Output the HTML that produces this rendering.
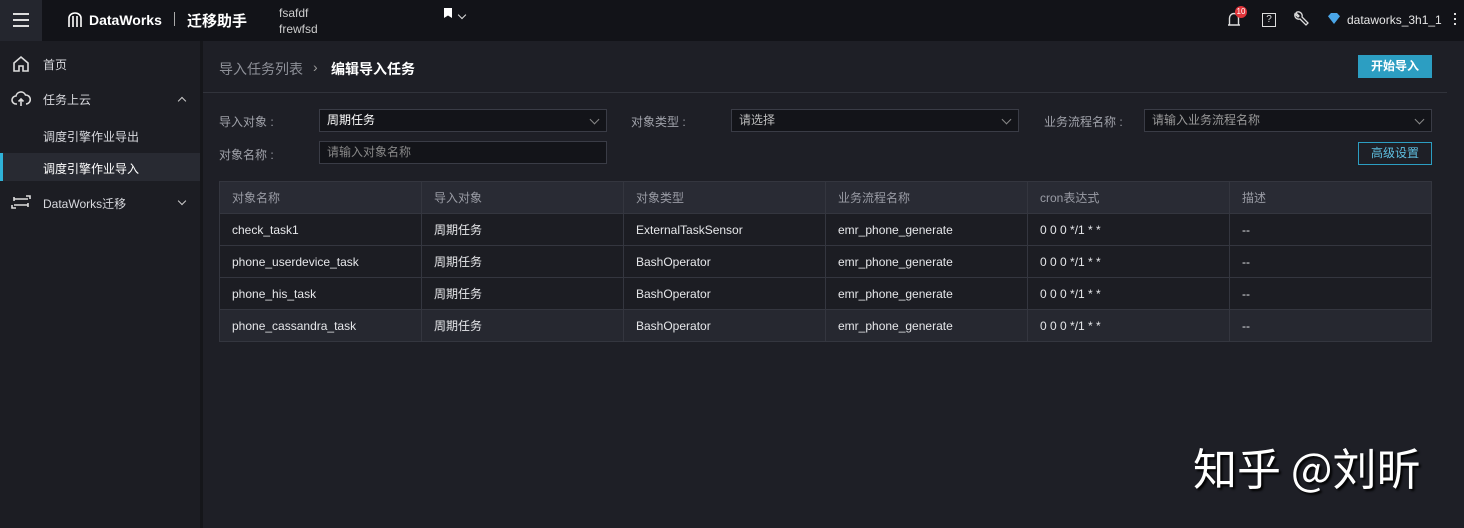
<!DOCTYPE html><html><head><meta charset="utf-8"><style>
*{margin:0;padding:0;box-sizing:border-box}
body{width:1464px;height:528px;overflow:hidden;background:#1e1f26;font-family:"Liberation Sans","Noto Sans CJK SC",sans-serif;color:#d8d9de;font-size:12px;position:relative}
.a{position:absolute}
.top{left:0;top:0;width:1464px;height:41px;background:#121318}
.side{left:0;top:41px;width:200px;height:487px;background:#1c1d23}
.sep{left:200px;top:41px;width:3px;height:487px;background:#15161a}
.inp{position:absolute;height:23px;background:#131419;border:1px solid #3a3c46;padding-left:7px;line-height:21px;font-size:12px}
.chev{position:absolute;right:8px;top:6px;width:7px;height:7px;border-right:1.3px solid #888;border-bottom:1.3px solid #888;transform:rotate(45deg)}
table{position:absolute;left:219px;top:181px;width:1213px;border-collapse:collapse;font-size:12px}
td,th{border:1px solid #34363f;height:32px;padding-left:12px;text-align:left;font-weight:normal;width:202px}
th{background:#292b34;color:#9a9ca5}
td{background:#1c1d23;color:#e6e7ea}
tr.h td{background:#262830}
</style></head><body>
<div class="a top"></div>
<div class="a" style="left:0;top:0;width:42px;height:41px;background:#24262e"></div>
<div class="a" style="left:13px;top:13px;width:16px;height:2px;background:#ddd;box-shadow:0 6px 0 #ddd,0 12px 0 #ddd"></div>
<svg class="a" style="left:67px;top:12px" width="16" height="16" viewBox="0 0 16 16" fill="none" stroke="#fff" stroke-width="1.6"><path d="M2 15V6a6 5 0 0 1 12 0v9M6 15V4M10 15V4"/></svg>
<div class="a" style="left:89px;top:12px;font-size:14px;color:#fff;font-weight:bold">DataWorks</div>
<div class="a" style="left:174px;top:12px;width:1px;height:14px;background:#aaa"></div>
<div class="a" style="left:187px;top:10px;font-size:15px;color:#fff;font-weight:bold">迁移助手</div>
<div class="a" style="left:279px;top:5px;line-height:16px;font-size:12px;color:#ccc">fsafdf<br>frewfsd</div>
<div class="a" style="left:444px;top:8px;width:8px;height:10px;background:#fff;clip-path:polygon(0 0,100% 0,100% 100%,50% 75%,0 100%)"></div>
<div class="a" style="left:459px;top:12px;width:6px;height:6px;border-right:1.5px solid #ddd;border-bottom:1.5px solid #ddd;transform:rotate(45deg)"></div>
<svg class="a" style="left:1225px;top:10px" width="18" height="18" viewBox="0 0 18 18" fill="none" stroke="#ddd" stroke-width="1.4"><path d="M3 15h12M4.5 15V8a4.5 4.5 0 0 1 9 0v7"/></svg>
<div class="a" style="left:1235px;top:6px;width:12px;height:12px;background:#e0343a;border-radius:6px;font-size:8px;line-height:12px;text-align:center;color:#fff">10</div>
<div class="a" style="left:1262px;top:13px;width:14px;height:14px;border:1.5px solid #ddd;font-size:10px;line-height:11px;text-align:center;color:#ddd">?</div>
<svg class="a" style="left:1293px;top:11px" width="17" height="17" viewBox="0 0 17 17" fill="none" stroke="#ddd" stroke-width="1.3"><path d="M3 2l3 3-1 1-3-3a4 4 0 0 0 5 5l6 6 2-2-6-6a4 4 0 0 0-5-5z"/></svg>
<div class="a" style="left:1328px;top:13px;width:12px;height:11px;background:#4aa6e8;clip-path:polygon(0 30%,25% 0,75% 0,100% 30%,50% 100%)"></div>
<div class="a" style="left:1347px;top:13px;font-size:12px;color:#e6e6e6">dataworks_3h1_1</div>
<div class="a" style="left:1454px;top:13px;width:2px;height:2px;background:#ddd;box-shadow:0 5px 0 #ddd,0 10px 0 #ddd"></div>

<div class="a side"></div><div class="a sep"></div>
<svg class="a" style="left:12px;top:55px" width="18" height="18" viewBox="0 0 18 18" fill="none" stroke="#ddd" stroke-width="1.6"><path d="M2 8L9 2l7 6v8H11v-5H7v5H2z"/></svg>
<div class="a" style="left:43px;top:56px;font-size:12px">首页</div>
<svg class="a" style="left:11px;top:90px" width="20" height="18" viewBox="0 0 20 18" fill="none" stroke="#ddd" stroke-width="1.6"><path d="M6 14H5a4 4 0 0 1 0-8 5 5 0 0 1 9.5-1A4 4 0 0 1 15 14M10 16V9M7.5 11.5L10 9l2.5 2.5"/></svg>
<div class="a" style="left:43px;top:91px">任务上云</div>
<div class="a" style="left:179px;top:98px;width:6px;height:6px;border-left:1.5px solid #ccc;border-top:1.5px solid #ccc;transform:rotate(45deg)"></div>
<div class="a" style="left:43px;top:128px">调度引擎作业导出</div>
<div class="a" style="left:0;top:153px;width:200px;height:28px;background:#282a32"></div>
<div class="a" style="left:0;top:153px;width:3px;height:28px;background:#2fb2d8"></div>
<div class="a" style="left:43px;top:160px;color:#fff">调度引擎作业导入</div>
<svg class="a" style="left:11px;top:194px" width="20" height="16" viewBox="0 0 20 16" fill="none" stroke="#ddd" stroke-width="1.6"><path d="M3 5h14M3 3v4M17 11H3M17 9v4M1 11v3h4M19 5V2h-4"/></svg>
<div class="a" style="left:43px;top:195px">DataWorks迁移</div>
<div class="a" style="left:179px;top:198px;width:6px;height:6px;border-right:1.5px solid #ccc;border-bottom:1.5px solid #ccc;transform:rotate(45deg)"></div>

<div class="a" style="left:219px;top:59px;font-size:14px;color:#8e9098">导入任务列表</div>
<div class="a" style="left:313px;top:59px;font-size:14px;color:#999">›</div>
<div class="a" style="left:331px;top:59px;font-size:14px;color:#fff;font-weight:bold">编辑导入任务</div>
<div class="a" style="left:1358px;top:55px;width:74px;height:23px;background:#2c9ec2;color:#fff;text-align:center;line-height:23px;font-weight:bold">开始导入</div>
<div class="a" style="left:203px;top:92px;width:1244px;height:1px;background:#31333b"></div>

<div class="a" style="left:219px;top:113px;color:#a0a2aa">导入对象 :</div>
<div class="inp" style="left:319px;top:109px;width:288px;color:#fff">周期任务<i class="chev"></i></div>
<div class="a" style="left:631px;top:113px;color:#a0a2aa">对象类型 :</div>
<div class="inp" style="left:731px;top:109px;width:288px;color:#bbb">请选择<i class="chev"></i></div>
<div class="a" style="left:1044px;top:113px;color:#a0a2aa">业务流程名称 :</div>
<div class="inp" style="left:1144px;top:109px;width:288px;color:#999">请输入业务流程名称<i class="chev"></i></div>
<div class="a" style="left:219px;top:146px;color:#a0a2aa">对象名称 :</div>
<div class="inp" style="left:319px;top:141px;width:288px;color:#888">请输入对象名称</div>
<div class="a" style="left:1358px;top:142px;width:74px;height:23px;border:1px solid #2c9ec2;color:#5fbfe0;text-align:center;line-height:21px">高级设置</div>

<table>
<tr><th>对象名称</th><th>导入对象</th><th>对象类型</th><th>业务流程名称</th><th>cron表达式</th><th>描述</th></tr>
<tr><td>check_task1</td><td>周期任务</td><td>ExternalTaskSensor</td><td>emr_phone_generate</td><td>0 0 0 */1 * *</td><td>--</td></tr>
<tr><td>phone_userdevice_task</td><td>周期任务</td><td>BashOperator</td><td>emr_phone_generate</td><td>0 0 0 */1 * *</td><td>--</td></tr>
<tr><td>phone_his_task</td><td>周期任务</td><td>BashOperator</td><td>emr_phone_generate</td><td>0 0 0 */1 * *</td><td>--</td></tr>
<tr class="h"><td>phone_cassandra_task</td><td>周期任务</td><td>BashOperator</td><td>emr_phone_generate</td><td>0 0 0 */1 * *</td><td>--</td></tr>
</table>
<div class="a" style="left:1193px;top:436px;font-size:44px;color:#fff;line-height:60px;text-shadow:2px 2px 2px #000;font-family:'Noto Sans CJK SC',sans-serif">知乎 @刘昕</div>
</body></html>
